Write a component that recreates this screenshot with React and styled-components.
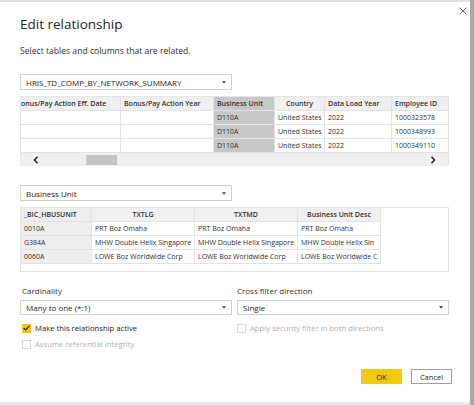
import React from "react";
import styled, { createGlobalStyle } from "styled-components";

const Global = createGlobalStyle`
  * { box-sizing: border-box; }
  html, body { margin: 0; padding: 0; background: #ffffff; }
  body { font-family: "Open Sans", "Noto Sans", sans-serif; color: #252423; }
`;

const Page = styled.div`
  width: 474px;
  height: 405px;
  display: flex;
  overflow: hidden;
`;

const Dialog = styled.div`
  flex: 1;
  display: flex;
  flex-direction: column;
  border-top: 2px solid #dedede;
  border-bottom: 3px solid #e6e6e6;
  padding-left: 20px;
  background: #fff;
`;

const Strip = styled.div`
  width: 4px;
  background: #a8a8a8;
`;

const Header = styled.div`
  display: flex;
  justify-content: space-between;
  align-items: flex-start;
  padding-right: 3px;
`;

const Title = styled.h1`
  margin: 13px 0 0;
  font-size: 13.5px;
  line-height: 18px;
  font-weight: 400;
  color: #252423;
`;

const Close = styled.button`
  margin-top: 5px;
  width: 8px;
  height: 8px;
  padding: 0;
  border: 0;
  background: transparent;
  display: flex;
`;

const Subtitle = styled.p`
  margin: 12px 0 0;
  font-size: 8.6px;
  line-height: 12px;
  color: #323130;
`;

const Select = styled.div`
  width: 212px;
  height: ${p => p.$h || 16}px;
  margin-top: ${p => p.$mt || 0}px;
  border: 1px solid #d2d0ce;
  background: #fff;
  display: flex;
  align-items: center;
  justify-content: space-between;
  padding: 0 5px 0 5px;
  font-size: 8px;
  color: #252423;
`;

const Caret = () => (
  <svg width="4" height="3" viewBox="0 0 4 3">
    <path d="M0 0 L4 0 L2 3 Z" fill="#605e5c" />
  </svg>
);

const Grid = styled.div`
  display: grid;
  grid-template-columns: ${p => p.$cols};
  grid-auto-rows: 14px;
  width: ${p => p.$w}px;
`;

const Cell = styled.div`
  font-size: 7px;
  line-height: 13px;
  white-space: nowrap;
  overflow: hidden;
  padding: 0 ${p => p.$pad ?? 3}px;
  border-right: 1px solid #e3e3e3;
  border-bottom: 1px solid #e3e3e3;
  font-weight: ${p => (p.$head ? 600 : 400)};
  text-align: ${p => (p.$center ? "center" : "left")};
  background: ${p => (p.$sel ? "#c8c8c8" : p.$muted ? "#eeeeee" : p.$head ? "#f0f0f0" : "#ffffff")};
  color: #323130;
`;

const Table1 = styled.div`
  margin-top: 6px;
  width: 429px;
  border: 1px solid #e6e6e6;
  border-bottom: 0;
`;

const Scroll = styled.div`
  height: 13px;
  display: flex;
  align-items: center;
  background: #f0f0f0;
  padding: 0 12px 0 12px;
`;

const Thumb = styled.div`
  width: 31px;
  height: 10px;
  margin-left: 47px;
  background: #c4c4c4;
`;

const Spacer = styled.div`
  flex: 1;
`;

const Chevron = ({ dir }) => (
  <svg width="6" height="8" viewBox="0 0 6 8">
    <path
      d={dir === "left" ? "M4.5 0.8 L1.5 4 L4.5 7.2" : "M1.5 0.8 L4.5 4 L1.5 7.2"}
      fill="none"
      stroke="#252423"
      strokeWidth="1.5"
    />
  </svg>
);

const Table2 = styled.div`
  margin-top: 6px;
  width: 429px;
  height: 65px;
  border: 1px solid #e3e3e3;
`;

const Options = styled.div`
  margin-top: 13px;
  display: grid;
  grid-template-columns: 212px 212px;
  column-gap: 5px;
`;

const Col = styled.div`
  display: flex;
  flex-direction: column;
`;

const Label = styled.div`
  font-size: 8px;
  line-height: 12px;
  padding-left: ${p => p.$pl || 0}px;
  color: #323130;
`;

const Check = styled.div`
  margin-top: ${p => p.$mt}px;
  display: flex;
  align-items: center;
  gap: 4px;
  padding-left: ${p => p.$pl || 0}px;
  height: 12px;
  font-size: 7.7px;
  color: ${p => (p.$disabled ? "#b3b0ad" : "#252423")};
`;

const Box = styled.span`
  width: 9px;
  height: 9px;
  display: inline-flex;
  align-items: center;
  justify-content: center;
  background: ${p => (p.$on ? "#f2c811" : "#fff")};
  border: 1px solid ${p => (p.$on ? "#f2c811" : "#dcdad8")};
`;

const Footer = styled.div`
  margin-top: 19px;
  display: flex;
  justify-content: flex-end;
  gap: 9px;
  padding-right: 18px;
`;

const Button = styled.button`
  width: 41px;
  height: 15px;
  padding: 0;
  font-family: inherit;
  font-size: 7.5px;
  color: #252423;
  background: ${p => (p.$primary ? "#f2c811" : "#ffffff")};
  border: 1px solid ${p => (p.$primary ? "#f2c811" : "#a19f9d")};
`;

const t1Cols = "100px 93px 61px 50px 67px 57px";
const t1Head = ["onus/Pay Action Eff. Date", "Bonus/Pay Action Year", "Business Unit", "Country", "Data Load Year", "Employee ID"];
const t1Rows = [
  ["1000323578"],
  ["1000348993"],
  ["1000349110"],
];

const t2Cols = "71px 103px 103px 83px";
const t2Rows = [
  ["0010A", "PRT Boz Omaha", "PRT Boz Omaha", "PRT Boz Omaha"],
  ["G384A", "MHW Double Helix Singapore", "MHW Double Helix Singapore", "MHW Double Helix Sin"],
  ["0060A", "LOWE Boz Worldwide Corp", "LOWE Boz Worldwide Corp", "LOWE Boz Worldwide C"],
];

export default function App() {
  return (
    <>
      <Global />
      <Page>
        <Dialog>
          <Header>
            <Title>Edit relationship</Title>
            <Close aria-label="Close">
              <svg width="8" height="8" viewBox="0 0 8 8">
                <path d="M0.5 0.5 L7.5 7.5 M7.5 0.5 L0.5 7.5" stroke="#605e5c" strokeWidth="0.9" />
              </svg>
            </Close>
          </Header>
          <Subtitle>Select tables and columns that are related.</Subtitle>

          <Select $mt={17}>
            <span>HRIS_TD_COMP_BY_NETWORK_SUMMARY</span>
            <Caret />
          </Select>

          <Table1>
            <Grid $cols={t1Cols} $w={427}>
              {t1Head.map((h, i) => (
                <Cell key={h} $head $sel={i === 2} $center={i === 3} $pad={i === 0 ? 0 : 3}>
                  {h}
                </Cell>
              ))}
              {t1Rows.map(r => (
                <React.Fragment key={r[0]}>
                  <Cell />
                  <Cell />
                  <Cell $sel>D110A</Cell>
                  <Cell>United States</Cell>
                  <Cell>2022</Cell>
                  <Cell>{r[0]}</Cell>
                </React.Fragment>
              ))}
            </Grid>
            <Scroll>
              <Chevron dir="left" />
              <Thumb />
              <Spacer />
              <Chevron dir="right" />
            </Scroll>
          </Table1>

          <Select $mt={19}>
            <span>Business Unit</span>
            <Caret />
          </Select>

          <Table2>
            <Grid $cols={t2Cols} $w={360}>
              <Cell $head $muted>_BIC_HBUSUNIT</Cell>
              <Cell $head $center>TXTLG</Cell>
              <Cell $head $center>TXTMD</Cell>
              <Cell $head $center>Business Unit Desc</Cell>
              {t2Rows.map(r => (
                <React.Fragment key={r[0]}>
                  <Cell $muted>{r[0]}</Cell>
                  <Cell>{r[1]}</Cell>
                  <Cell>{r[2]}</Cell>
                  <Cell>{r[3]}</Cell>
                </React.Fragment>
              ))}
            </Grid>
          </Table2>

          <Options>
            <Col>
              <Label $pl={2}>Cardinality</Label>
              <Select $mt={3} $h={15}>
                <span>Many to one (*:1)</span>
                <Caret />
              </Select>
              <Check $mt={7} $pl={2}>
                <Box $on>
                  <svg width="7" height="6" viewBox="0 0 7 6">
                    <path d="M0.6 3 L2.6 5 L6.4 0.8" fill="none" stroke="#252423" strokeWidth="1.2" />
                  </svg>
                </Box>
                Make this relationship active
              </Check>
              <Check $mt={4} $pl={2} $disabled>
                <Box />
                Assume referential integrity
              </Check>
            </Col>
            <Col>
              <Label>Cross filter direction</Label>
              <Select $mt={3} $h={15}>
                <span>Single</span>
                <Caret />
              </Select>
              <Check $mt={7} $disabled>
                <Box />
                Apply security filter in both directions
              </Check>
            </Col>
          </Options>

          <Footer>
            <Button $primary>OK</Button>
            <Button>Cancel</Button>
          </Footer>
        </Dialog>
        <Strip />
      </Page>
    </>
  );
}
